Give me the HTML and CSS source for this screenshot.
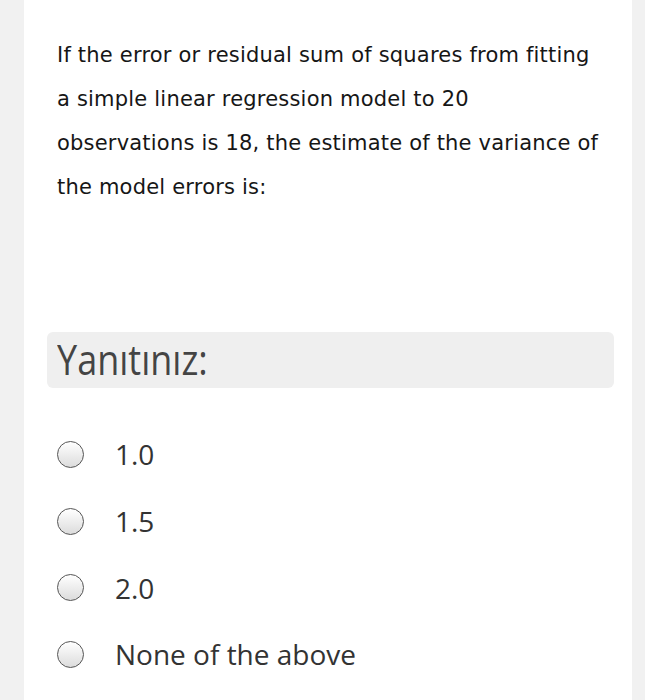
FILE: index.html
```html
<!DOCTYPE html>
<html>
<head>
<meta charset="utf-8">
<link rel="stylesheet" href="styles.css">
</head>
<body>
<div class="page">
  <div class="card">
    <div class="question">
      <p>If the error or residual sum of squares from fitting a simple linear regression model to 20 observations is 18, the estimate of the variance of the model errors is:</p>
    </div>
    <div class="answer-head"><span class="answer-title">Yanıtınız:</span></div>
    <ul class="options">
      <li class="option"><span class="radio"></span><span class="label">1.0</span></li>
      <li class="option"><span class="radio"></span><span class="label">1.5</span></li>
      <li class="option"><span class="radio"></span><span class="label">2.0</span></li>
      <li class="option"><span class="radio"></span><span class="label">None of the above</span></li>
    </ul>
  </div>
</div>
</body>
</html>
```
FILE: styles.css
```css
html, body {
  margin: 0;
  padding: 0;
  background: #f1f1f1;
}
.page {
  padding: 0 13px 0 24px;
}
.card {
  background: #ffffff;
  height: 700px;
  padding: 0 18px 0 23px;
  overflow: hidden;
}
.question {
  padding: 33px 0 0 10px;
  height: 299px;
  box-sizing: border-box;
}
.question p {
  margin: 0;
  font-family: "DejaVu Sans", Verdana, sans-serif;
  font-size: 21px;
  letter-spacing: 0.2px;
  line-height: 44px;
  color: #161616;
  width: 552px;
}
.answer-head {
  margin-top: 33px;
  height: 56px;
  background: #efefef;
  border-radius: 6px;
  padding-left: 10px;
  display: flex;
  align-items: center;
}
.answer-title {
  display: inline-block;
  font-family: "Open Sans", sans-serif;
  font-size: 36px;
  line-height: 56px;
  color: #444;
  transform: scaleY(1.16);
}
.options {
  list-style: none;
  margin: 0;
  padding: 0;
  margin-top: 33px;
}
.option {
  display: flex;
  align-items: center;
  height: 66.7px;
  padding-left: 10px;
}
.radio {
  width: 25px;
  height: 25px;
  border: 1.5px solid #555;
  border-radius: 50%;
  background: linear-gradient(#ffffff, #dcdcdc);
  flex: none;
}
.label {
  margin-left: 31px;
  font-family: "Open Sans", sans-serif;
  font-size: 28px;
  color: #333;
}
```
